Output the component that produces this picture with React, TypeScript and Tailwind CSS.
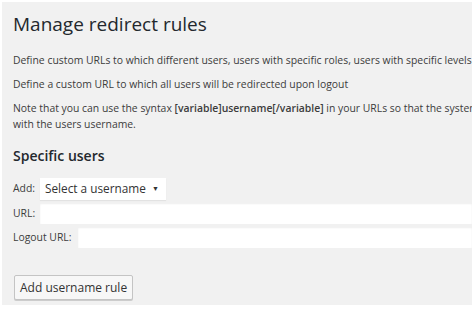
import { useState } from "react";

const App = () => {
  const [url, setUrl] = useState("");
  const [logoutUrl, setLogoutUrl] = useState("");

  return (
    <div className="w-[474px] h-[311px] overflow-hidden bg-white pt-[2px] pl-[2px] pr-[2px]">
      <div
        className="h-[303px] overflow-hidden bg-[#f1f1f1] pl-[11px] text-[#3c3c3c]"
        style={{ fontFamily: '"Open Sans", "Noto Sans", sans-serif' }}
      >
        {/* Page title */}
        <h1 className="pt-[8px] text-[19px] leading-[28px] font-normal text-[#23282d] whitespace-nowrap">
          Manage redirect rules
        </h1>

        {/* Intro text */}
        <div className="mt-[14px] text-[10.4px] leading-[16px] whitespace-nowrap">
          <p>
            Define custom URLs to which different users, users with specific roles, users with specific levels and all other users will be redirected
          </p>
          <p className="mt-[8px]">Define a custom URL to which all users will be redirected upon logout</p>
          <p className="mt-[8px]">
            Note that you can use the syntax <strong className="font-semibold">[variable]username[/variable]</strong> in your URLs so that the system will build a dynamic URL
            <br />
            with the users username.
          </p>
        </div>

        {/* Specific users */}
        <h2 className="mt-[14px] text-[14px] leading-[20px] font-semibold text-[#23282d] whitespace-nowrap">Specific users</h2>

        <div className="mt-[12px] flex flex-col gap-[3px] text-[10.4px] whitespace-nowrap">
          <div className="flex items-center">
            <label className="w-[27px]">Add:</label>
            <div className="flex h-[22px] w-[126px] items-center justify-between bg-white pl-[5px] pr-[7px] text-[11.8px] text-[#333] shadow-[0_1px_1px_rgba(0,0,0,0.06)]">
              <span>Select a username</span>
              <span className="text-[7px]">▼</span>
            </div>
          </div>
          <div className="flex items-center">
            <label className="w-[27px]">URL:</label>
            <input
              value={url}
              onChange={(e) => setUrl(e.target.value)}
              className="h-[21px] flex-1 bg-white shadow-[inset_0_1px_2px_rgba(0,0,0,0.07)] outline-none"
            />
          </div>
          <div className="flex items-center">
            <label className="w-[65px]">Logout URL:</label>
            <input
              value={logoutUrl}
              onChange={(e) => setLogoutUrl(e.target.value)}
              className="h-[21px] flex-1 bg-white shadow-[inset_0_1px_2px_rgba(0,0,0,0.07)] outline-none"
            />
          </div>
        </div>

        <button className="mt-[27px] ml-[1px] h-[25px] rounded-[2px] border border-[#c4c4c4] bg-[#f7f7f7] px-[5px] text-[12px] leading-[20px] text-[#333] whitespace-nowrap shadow-[0_1px_0_#ccc]">
          Add username rule
        </button>
      </div>
    </div>
  );
};

export default App;
